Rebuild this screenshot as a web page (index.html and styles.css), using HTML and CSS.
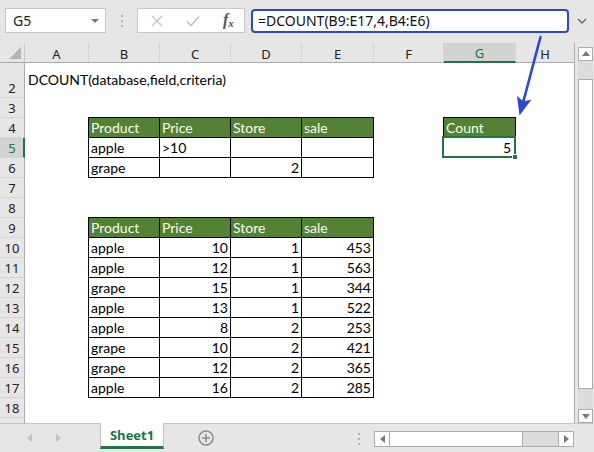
FILE: index.html
```html
<!DOCTYPE html>
<html>
<head>
<meta charset="utf-8">
<link rel="stylesheet" href="styles.css">
</head>
<body>
<div class="app">
  <div class="fbar">
    <div class="namebox"><span class="nb-text">G5</span><span class="nb-caret"></span></div>
    <div class="vdots"><i></i><i></i><i></i></div>
    <div class="fbtns">
      <svg class="fb-x" width="12" height="12" viewBox="0 0 12 12"><path d="M1 1L11 11M11 1L1 11" stroke="#c3c3c3" stroke-width="1.4" fill="none"/></svg>
      <svg class="fb-v" width="14" height="12" viewBox="0 0 14 12"><path d="M1 6.5L5 10.5L13 1.5" stroke="#c3c3c3" stroke-width="1.6" fill="none"/></svg>
      <span class="fb-fx">f<sub>x</sub></span>
    </div>
    <div class="finput">=DCOUNT(B9:E17,4,B4:E6)</div>
    <div class="fchev"><svg width="10" height="6" viewBox="0 0 10 6"><path d="M1 1L5 5L9 1" stroke="#6a6a6a" stroke-width="1.4" fill="none"/></svg></div>
  </div>

  <div class="main">
    <div class="rowhdrs">
      <div class="corner"><span class="tri"></span></div>
      <div class="rh rh-tall">2</div>
      <div class="rh">3</div>
      <div class="rh">4</div>
      <div class="rh rh-sel">5</div>
      <div class="rh">6</div>
      <div class="rh">7</div>
      <div class="rh">8</div>
      <div class="rh">9</div>
      <div class="rh">10</div>
      <div class="rh">11</div>
      <div class="rh">12</div>
      <div class="rh">13</div>
      <div class="rh">14</div>
      <div class="rh">15</div>
      <div class="rh">16</div>
      <div class="rh">17</div>
      <div class="rh">18</div>
      <div class="rh rh-part"></div>
    </div>
    <div class="body">
      <div class="colhdrs">
        <div class="ch w64">A</div>
        <div class="ch w71">B</div>
        <div class="ch w71">C</div>
        <div class="ch w71">D</div>
        <div class="ch w72">E</div>
        <div class="ch w70">F</div>
        <div class="ch w72 ch-sel">G</div>
        <div class="ch w59 ch-last">H</div>
      </div>
      <div class="cells">
        <div class="a2">DCOUNT(database,field,criteria)</div>

        <div class="tbl tbl-crit">
          <div class="hd">Product</div><div class="hd">Price</div><div class="hd">Store</div><div class="hd">sale</div>
          <div>apple</div><div>&gt;10</div><div></div><div></div>
          <div>grape</div><div></div><div class="num">2</div><div></div>
        </div>

        <div class="tbl tbl-data">
          <div class="hd">Product</div><div class="hd">Price</div><div class="hd">Store</div><div class="hd">sale</div>
          <div>apple</div><div class="num">10</div><div class="num">1</div><div class="num">453</div>
          <div>apple</div><div class="num">12</div><div class="num">1</div><div class="num">563</div>
          <div>grape</div><div class="num">15</div><div class="num">1</div><div class="num">344</div>
          <div>apple</div><div class="num">13</div><div class="num">1</div><div class="num">522</div>
          <div>apple</div><div class="num">8</div><div class="num">2</div><div class="num">253</div>
          <div>grape</div><div class="num">10</div><div class="num">2</div><div class="num">421</div>
          <div>grape</div><div class="num">12</div><div class="num">2</div><div class="num">365</div>
          <div>apple</div><div class="num">16</div><div class="num">2</div><div class="num">285</div>
        </div>

        <div class="tbl tbl-count">
          <div class="hd">Count</div>
          <div class="num sel">5<span class="handle"></span></div>
        </div>
      </div>
    </div>
    <div class="vscroll">
      <div class="sb-btn"><svg width="8" height="5" viewBox="0 0 8 5"><path d="M0 5L4 0L8 5Z" fill="#7a7a7a"/></svg></div>
      <div class="sb-gap"></div>
      <div class="sb-thumb"></div>
      <div class="sb-track"></div>
      <div class="sb-btn"><svg width="8" height="5" viewBox="0 0 8 5"><path d="M0 0L4 5L8 0Z" fill="#7a7a7a"/></svg></div>
    </div>
  </div>

  <div class="tabbar">
    <div class="navs">
      <svg width="5" height="8" viewBox="0 0 5 8"><path d="M5 0L0 4L5 8Z" fill="#c2c2c2"/></svg>
      <svg width="5" height="8" viewBox="0 0 5 8"><path d="M0 0L5 4L0 8Z" fill="#c2c2c2"/></svg>
    </div>
    <div class="tab">Sheet1</div>
    <svg class="addsheet" width="16" height="16" viewBox="0 0 16 16"><circle cx="8" cy="8" r="7" fill="none" stroke="#8c8c8c" stroke-width="1.5"/><path d="M8 4V12M4 8H12" stroke="#8c8c8c" stroke-width="1.6"/></svg>
    <div class="hsplit"><i></i><i></i><i></i></div>
    <div class="hscroll">
      <div class="hs-btn"><svg width="5" height="8" viewBox="0 0 5 8"><path d="M5 0L0 4L5 8Z" fill="#7a7a7a"/></svg></div>
      <div class="hs-thumb"></div>
      <div class="hs-track"></div>
      <div class="hs-btn hs-right"><svg width="5" height="8" viewBox="0 0 5 8"><path d="M0 0L5 4L0 8Z" fill="#7a7a7a"/></svg></div>
    </div>
  </div>

  <svg class="arrow" width="594" height="452" viewBox="0 0 594 452">
    <path d="M540.5 37L523.5 101" stroke="#2a4acb" stroke-width="2.6" fill="none" stroke-linecap="round"/>
    <path d="M519.5 115.5L517 96L523.5 101.5L531.5 99.5Z" fill="#2a4acb"/>
  </svg>
</div>
</body>
</html>
```

FILE: styles.css
```css
* { box-sizing: border-box; }
html, body { margin: 0; padding: 0; background: #e6e6e6; }
.app {
  position: relative;
  width: 594px;
  height: 452px;
  overflow: hidden;
  background: #e6e6e6;
  font-family: "Noto Sans", "DejaVu Sans", sans-serif;
}

/* formula bar */
.fbar {
  height: 43px;
  display: flex;
  align-items: flex-start;
  padding-top: 8px;
  padding-left: 5px;
}
.namebox {
  width: 101px;
  height: 25px;
  background: #fff;
  border: 1px solid #c6c6c6;
  display: flex;
  align-items: center;
  justify-content: space-between;
  padding: 0 6px 0 7px;
}
.nb-text { font-size: 14px; color: #222; }
.nb-caret {
  width: 0; height: 0;
  border-left: 4px solid transparent;
  border-right: 4px solid transparent;
  border-top: 4px solid #777;
}
.vdots {
  width: 31px;
  height: 25px;
  display: flex;
  flex-direction: column;
  align-items: center;
  justify-content: center;
  gap: 3px;
}
.vdots i, .hsplit i { display: block; width: 2px; height: 2px; background: #b0b0b0; }
.fbtns {
  width: 108px;
  height: 25px;
  background: #fff;
  border: 1px solid #c6c6c6;
  display: flex;
  align-items: center;
  padding-left: 13px;
}
.fb-x { margin-right: 23px; }
.fb-v { margin-right: 23px; }
.fb-fx {
  font-family: "Liberation Serif", serif;
  font-style: italic;
  font-size: 16px;
  color: #555;
  font-weight: bold;
  line-height: 1;
}
.fb-fx sub { font-size: 11px; vertical-align: -2px; }
.finput {
  margin-left: 6px;
  margin-top: 1px;
  width: 318px;
  height: 24px;
  border: 2px solid #2b4bbd;
  border-radius: 4px;
  background: #fff;
  font-size: 14px;
  color: #111;
  line-height: 20px;
  padding-left: 5px;
}
.fchev {
  flex: 1;
  height: 25px;
  display: flex;
  align-items: center;
  justify-content: center;
}

/* main grid area */
.main {
  display: flex;
  height: 380px;
}
.rowhdrs {
  width: 25px;
  display: flex;
  flex-direction: column;
}
.corner {
  height: 20px;
  border-right: 1px solid #c8c8c8;
  border-bottom: 1px solid #ababab;
  position: relative;
}
.tri {
  position: absolute;
  right: 3px;
  bottom: 3px;
  width: 0; height: 0;
  border-left: 12px solid transparent;
  border-bottom: 12px solid #b5b5b5;
}
.rh {
  height: 20px;
  border-right: 1px solid #ababab;
  border-bottom: 1px solid #d4d4d4;
  font-size: 13px;
  color: #222;
  display: flex;
  align-items: center;
  justify-content: center;
  padding-top: 1px;
}
.rh-tall { height: 35px; align-items: flex-end; padding-bottom: 0; }
.rh-sel {
  background: #d3d3d3;
  color: #217346;
  border-right: 2px solid #217346;
  padding-left: 1px;
}
.rh-part { height: 5px; border-bottom: 0; }

.body {
  width: 550px;
  display: flex;
  flex-direction: column;
  border-right: 1px solid #ababab;
}
.colhdrs {
  height: 20px;
  display: flex;
  border-bottom: 1px solid #ababab;
}
.ch {
  height: 19px;
  border-right: 1px solid #d4d4d4;
  font-size: 13px;
  color: #222;
  display: flex;
  align-items: center;
  justify-content: center;
  padding-top: 2px;
}
.ch-sel {
  background: #d3d3d3;
  color: #217346;
  border-bottom: 2px solid #217346;
  height: 20px;
  margin-bottom: -1px;
}
.ch-last { border-right: 0; }
.w64 { width: 64px; }
.w59 { width: 58px; }
.w70 { width: 70px; }
.w71 { width: 71px; }
.w72 { width: 72px; }

.cells {
  flex: 1;
  background: #fff;
  display: grid;
  grid-template-columns: 64px 71px 71px 71px 72px 70px 72px 58px;
  grid-template-rows: 35px repeat(16, 20px) 4px;
  font-family: "Lato", "Liberation Sans", sans-serif;
  font-size: 14px;
  color: #000;
}
.a2 {
  grid-column: 1 / 9;
  grid-row: 1;
  padding-left: 3px;
  display: flex;
  align-items: center;
  padding-bottom: 2px;
}
.tbl {
  display: grid;
  border-left: 1px solid #000;
  border-top: 1px solid #000;
  margin-left: -1px;
  margin-top: -1px;
  align-self: start;
}
.tbl > div {
  height: 20px;
  border-right: 1px solid #000;
  border-bottom: 1px solid #000;
  line-height: 19px;
  padding: 0 2px 0 2px;
  white-space: nowrap;
}
.tbl > .hd {
  background: #548235;
  color: #fafaf0;
}
.tbl > .num { text-align: right; }
.tbl-crit {
  grid-column: 2 / 6;
  grid-row: 3 / 6;
  grid-template-columns: 71px 71px 71px 72px;
}
.tbl-data {
  grid-column: 2 / 6;
  grid-row: 8 / 17;
  grid-template-columns: 71px 71px 71px 72px;
}
.tbl-count {
  grid-column: 7 / 8;
  grid-row: 3 / 5;
  grid-template-columns: 72px;
}
.tbl > .sel {
  position: relative;
  height: 22px;
  margin-left: -2px;
  margin-top: -2px;
  width: 74px;
  border: 2px solid #217346;
  line-height: 20px;
  padding-right: 3px;
}
.handle {
  position: absolute;
  right: -4px;
  bottom: -4px;
  width: 6px;
  height: 6px;
  background: #217346;
  border: 1px solid #fff;
}

/* vertical scrollbar */
.vscroll {
  width: 19px;
  display: flex;
  flex-direction: column;
  padding: 4px 1px 0 3px;
}
.sb-btn {
  height: 14px;
  border: 1px solid #ababab;
  background: #fdfdfd;
  display: flex;
  align-items: center;
  justify-content: center;
}
.sb-gap { height: 18px; background: #dcdcdc; }
.sb-thumb {
  height: 313px;
  border: 1px solid #ababab;
  background: #fff;
}
.sb-track { height: 20px; background: #dcdcdc; }

/* tab bar */
.tabbar {
  height: 29px;
  border-top: 1px solid #c6c6c6;
  display: flex;
  align-items: flex-start;
}
.navs {
  width: 100px;
  height: 28px;
  display: flex;
  align-items: center;
  gap: 24px;
  padding-left: 27px;
}
.tab {
  width: 64px;
  height: 26px;
  margin-top: -1px;
  background: #fff;
  border-left: 1px solid #c6c6c6;
  border-right: 1px solid #c6c6c6;
  border-bottom: 3px solid #217346;
  color: #217346;
  font-family: "Open Sans", "Noto Sans", sans-serif;
  font-weight: bold;
  font-size: 13px;
  display: flex;
  align-items: center;
  justify-content: center;
  padding-top: 1px;
}
.addsheet { margin-left: 34px; margin-top: 6px; }
.hsplit {
  margin-left: 144px;
  margin-top: 9px;
  display: flex;
  flex-direction: column;
  gap: 3px;
}
.hscroll {
  margin-left: 14px;
  margin-top: 7px;
  width: 200px;
  height: 16px;
  border: 1px solid #ababab;
  display: flex;
  background: #dcdcdc;
}
.hs-btn {
  width: 15px;
  background: #fdfdfd;
  display: flex;
  align-items: center;
  justify-content: center;
  border-right: 1px solid #ababab;
}
.hs-right { border-right: 0; border-left: 1px solid #ababab; }
.hs-thumb {
  width: 133px;
  background: #fff;
  border-right: 1px solid #ababab;
}
.hs-track { flex: 1; }

.arrow {
  position: absolute;
  left: 0;
  top: 0;
  pointer-events: none;
}
```
